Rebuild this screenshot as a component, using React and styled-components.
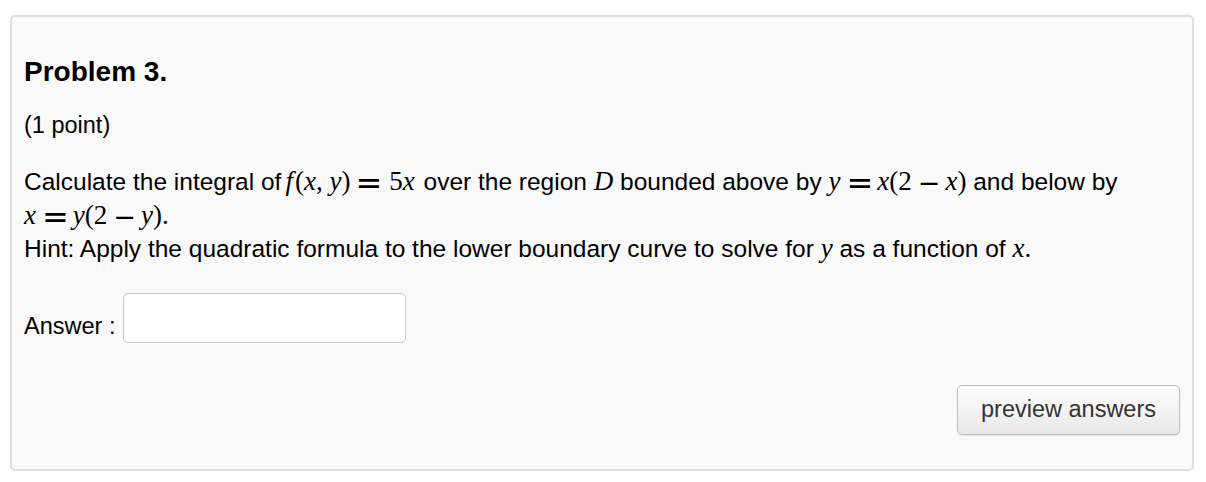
import React from "react";
import styled, { createGlobalStyle } from "styled-components";

const Global = createGlobalStyle`
  html, body { margin: 0; padding: 0; background: #ffffff; }
  body { font-family: "Liberation Sans", Arial, Helvetica, sans-serif; color: #000; }
`;

const Page = styled.div`
  padding: 15px 12px 12px 10px;
`;

const Panel = styled.section`
  border: 2px solid #dedede;
  border-radius: 5px;
  background: #f9f9f9;
  padding: 38px 12px 34px 12px;
`;

const Title = styled.h3`
  margin: 0;
  font-size: 28px;
  line-height: 34px;
  font-weight: bold;
`;

const Points = styled.p`
  margin: 19px 0 0 0;
  font-size: 23.5px;
  line-height: 34px;
`;

const Body = styled.div`
  margin-top: 23px;
  font-size: 24.5px;
  line-height: 33.5px;
`;

const Line = styled.div`
  white-space: nowrap;
`;

const MathSpan = styled.span`
  font-family: "Liberation Serif", "Times New Roman", serif;
  font-size: 27px;
  white-space: nowrap;
  margin-left: ${(p) => p.$ml ?? 0}px;
  margin-right: ${(p) => p.$mr ?? 0}px;
`;

const V = styled.i`
  font-style: italic;
  padding-right: ${(p) => p.$pad || 0}px;
`;

const Op = styled.span`
  font-family: "DejaVu Sans", sans-serif;
  font-size: ${(p) => p.$size}px;
  vertical-align: ${(p) => p.$va}px;
  line-height: 0;
  margin: 0 ${(p) => p.$r}px 0 ${(p) => p.$l}px;
`;

const AnswerRow = styled.div`
  display: flex;
  align-items: flex-end;
  gap: 8px;
  margin-top: 27px;
`;

const Label = styled.label`
  font-size: 23.5px;
  line-height: 28px;
  margin-bottom: 3px;
`;

const Input = styled.input`
  box-sizing: border-box;
  width: 283px;
  height: 50px;
  border: 1px solid #c8c8c8;
  border-radius: 5px;
  background: #fff;
  font-size: 22px;
  padding: 0 10px;
  outline: none;
`;

const Actions = styled.div`
  display: flex;
  justify-content: flex-end;
  margin-top: 42px;
`;

const Button = styled.button`
  box-sizing: border-box;
  width: 223px;
  height: 50px;
  border: 1px solid #bdbdbd;
  border-radius: 5px;
  background: linear-gradient(#fdfdfd, #e8e8e8);
  box-shadow: 0 1px 1px rgba(0, 0, 0, 0.08);
  color: #333;
  font-family: "Liberation Sans", Arial, sans-serif;
  font-size: 23.5px;
  padding: 0;
  cursor: pointer;
`;

const Eq = ({ l, r }) => (
  <Op $size={32} $va={-4} $l={l} $r={r}>=</Op>
);

const Minus = () => (
  <Op $size={27} $va={-2} $l={6} $r={5}>−</Op>
);

export default function App() {
  return (
    <>
      <Global />
      <Page>
        <Panel>
          <Title>Problem 3.</Title>
          <Points>(1 point)</Points>
          <Body>
            <Line>
              Calculate the integral of
              <MathSpan $ml={4} $mr={2}>
                <V $pad={2}>f</V>(<V>x</V>, <V>y</V>)<Eq l={5} r={7} />5<V>x</V>
              </MathSpan>{" "}
              over the region <MathSpan><V>D</V></MathSpan> bounded above by{" "}
              <MathSpan>
                <V>y</V>
                <Eq l={6} r={4} />
                <V>x</V>(2<Minus /><V>x</V>)
              </MathSpan>{" "}
              and below by
            </Line>
            <Line>
              <MathSpan>
                <V>x</V>
                <Eq l={6} r={4} />
                <V>y</V>(2<Minus /><V>y</V>).
              </MathSpan>
            </Line>
            <Line>
              Hint: Apply the quadratic formula to the lower boundary curve to solve for{" "}
              <MathSpan><V>y</V></MathSpan> as a function of <MathSpan><V>x</V>.</MathSpan>
            </Line>
          </Body>
          <AnswerRow>
            <Label htmlFor="ans">Answer :</Label>
            <Input id="ans" type="text" />
          </AnswerRow>
          <Actions>
            <Button type="button">preview answers</Button>
          </Actions>
        </Panel>
      </Page>
    </>
  );
}
